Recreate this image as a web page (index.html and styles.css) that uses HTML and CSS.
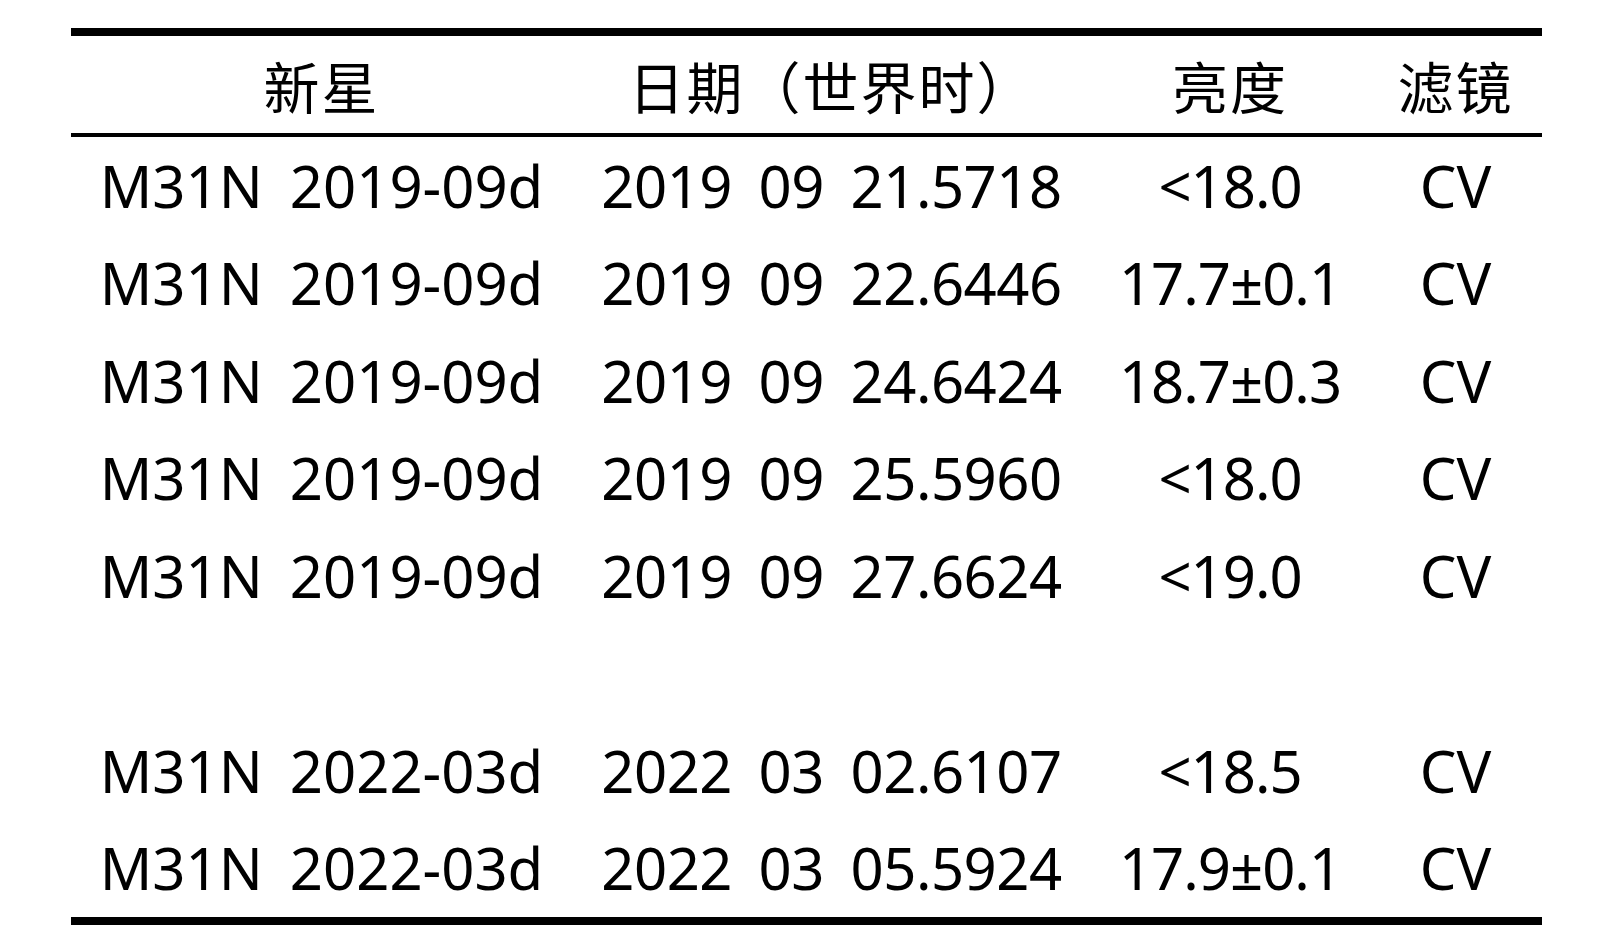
FILE: index.html
```html
<!DOCTYPE html>
<html lang="zh">
<head>
<meta charset="utf-8">
<title>新星观测</title>
<link rel="stylesheet" href="styles.css">
</head>
<body>
<div class="table">
  <div class="row head">
    <div class="c1">新星</div>
    <div class="c2">日期（世界时）</div>
    <div class="c3">亮度</div>
    <div class="c4">滤镜</div>
  </div>
  <div class="body">
    <div class="row"><div class="c1">M31N 2019-09d</div><div class="c2">2019 09 21.5718</div><div class="c3">&lt;18.0</div><div class="c4">CV</div></div>
    <div class="row"><div class="c1">M31N 2019-09d</div><div class="c2">2019 09 22.6446</div><div class="c3">17.7±0.1</div><div class="c4">CV</div></div>
    <div class="row"><div class="c1">M31N 2019-09d</div><div class="c2">2019 09 24.6424</div><div class="c3">18.7±0.3</div><div class="c4">CV</div></div>
    <div class="row"><div class="c1">M31N 2019-09d</div><div class="c2">2019 09 25.5960</div><div class="c3">&lt;18.0</div><div class="c4">CV</div></div>
    <div class="row"><div class="c1">M31N 2019-09d</div><div class="c2">2019 09 27.6624</div><div class="c3">&lt;19.0</div><div class="c4">CV</div></div>
    <div class="row blank"></div>
    <div class="row"><div class="c1">M31N 2022-03d</div><div class="c2">2022 03 02.6107</div><div class="c3">&lt;18.5</div><div class="c4">CV</div></div>
    <div class="row"><div class="c1">M31N 2022-03d</div><div class="c2">2022 03 05.5924</div><div class="c3">17.9±0.1</div><div class="c4">CV</div></div>
  </div>
</div>
</body>
</html>
```

FILE: styles.css
```css
html, body {
  margin: 0;
  padding: 0;
  background: #ffffff;
}

body {
  color: #000000;
  font-family: "Noto Sans", "Noto Sans CJK SC", sans-serif;
}

.table {
  margin: 28px 0 0 71px;
  width: 1471px;
  border-top: 8px solid #000;
  border-bottom: 8px solid #000;
}

.row {
  display: grid;
  grid-template-columns: 501px 519px 278px 173px;
  align-items: center;
  height: 97.5px;
  font-size: 58px;
  line-height: 1;
  white-space: nowrap;
}

.row > div {
  text-align: center;
}

.head {
  height: 97px;
  border-bottom: 4px solid #000;
  font-family: "Noto Sans CJK SC", "Noto Sans", sans-serif;
  font-size: 56px;
  letter-spacing: 2px;
}

.body .c1 {
  word-spacing: 12px;
}

.body .c2 {
  letter-spacing: -0.5px;
  word-spacing: 12px;
}

.body .c3 {
  letter-spacing: -1px;
}
```
